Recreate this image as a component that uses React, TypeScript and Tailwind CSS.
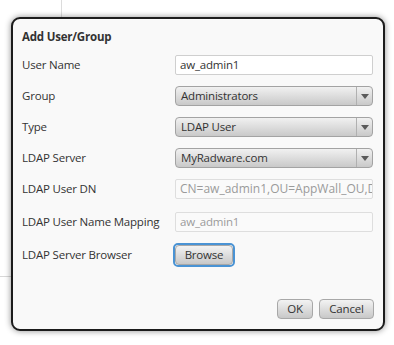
import React from "react";

const font = { fontFamily: '"Open Sans", "Noto Sans", sans-serif' };

function Combo({ value }: { value: string }) {
  return (
    <div className="flex h-[20px] w-[198px] items-stretch overflow-hidden rounded-[4px] border border-[#a3a3a3] bg-gradient-to-b from-[#f1f1f1] to-[#c9c9c9] text-[11.5px] leading-[18px] tracking-[-0.2px] text-[#333]">
      <div className="flex-1 pl-[5px]">{value}</div>
      <div className="flex w-[16px] items-center justify-center border-l border-[#b0b0b0]">
        <svg width="8" height="5" viewBox="0 0 8 5">
          <path d="M0 0 L8 0 L4 5 Z" fill="#5a5a5a" />
        </svg>
      </div>
    </div>
  );
}

function TextField({ value, disabled, wide }: { value: string; disabled?: boolean; wide?: boolean }) {
  return (
    <div
      className={
        "h-[20px] w-[198px] overflow-hidden whitespace-nowrap rounded-[2px] border pl-[4px] leading-[18px] " +
        (wide ? "text-[12px] " : "text-[11.5px] tracking-[-0.2px] ") +
        (disabled ? "border-[#dedede] bg-[#fafafa] text-[#9a9a9a]" : "border-[#cfcfcf] bg-white text-[#333]")
      }
    >
      {value}
    </div>
  );
}

function Row({ label, children, className }: { label: string; children: React.ReactNode; className?: string }) {
  return (
    <div className={"flex items-center " + (className ?? "")}>
      <div className="w-[153px] text-[11.5px] leading-[16px] tracking-[-0.2px] text-[#333]">{label}</div>
      {children}
    </div>
  );
}

function Btn({ children, className }: { children: React.ReactNode; className?: string }) {
  return (
    <div
      className={
        "flex h-[20px] items-center justify-center rounded-[4px] border border-[#a8a8a8] bg-gradient-to-b from-[#f3f3f3] to-[#c8c8c8] text-[11.5px] tracking-[-0.2px] text-[#333] " +
        (className ?? "")
      }
    >
      {children}
    </div>
  );
}

export default function App() {
  return (
    <div className="relative h-[345px] w-[394px] overflow-hidden bg-white" style={font}>
      <div className="absolute left-[61px] top-0 h-[30px] w-px bg-[#dcdcdc]" />
      <div className="absolute left-0 top-[276px] h-px w-[20px] bg-[#d8d8d8]" />
      <div className="relative ml-[11px] mt-[17px] flex h-[314px] w-[374px] flex-col rounded-[9px] border-2 border-[#1c1c1c] bg-[#f9f9f9] pl-[9px] pr-[9px] shadow-[0_0_6px_rgba(0,0,0,0.45)]">
        <div className="mt-[10px] text-[11.5px] font-bold leading-[16px] tracking-[-0.2px] text-[#333]">Add User/Group</div>
        <div className="mt-[10px] flex flex-col">
          <Row label="User Name">
            <TextField value="aw_admin1" />
          </Row>
          <Row label="Group" className="mt-[11px]">
            <Combo value="Administrators" />
          </Row>
          <Row label="Type" className="mt-[11px]">
            <Combo value="LDAP User" />
          </Row>
          <Row label="LDAP Server" className="mt-[11px]">
            <Combo value="MyRadware.com" />
          </Row>
          <Row label="LDAP User DN" className="mt-[11px]">
            <TextField value="CN=aw_admin1,OU=AppWall_OU,DC=MyRadware,DC=com" disabled wide />
          </Row>
          <Row label="LDAP User Name Mapping" className="mt-[13px]">
            <TextField value="aw_admin1" disabled />
          </Row>
          <Row label="LDAP Server Browser" className="mt-[11px]">
            <div className="-ml-[2px] rounded-[5px] border-2 border-[#4a93d4] p-0">
              <Btn className="h-[19px] w-[58px] rounded-[3px]">Browse</Btn>
            </div>
          </Row>
        </div>
        <div className="mt-auto mb-[10px] flex justify-end gap-[6px]">
          <Btn className="w-[36px]">OK</Btn>
          <Btn className="w-[55px]">Cancel</Btn>
        </div>
      </div>
    </div>
  );
}
